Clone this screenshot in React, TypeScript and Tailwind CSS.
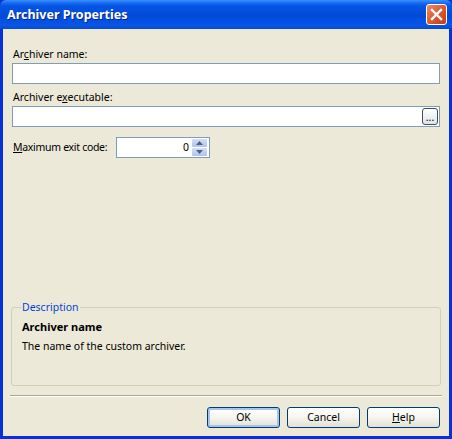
const uiFont = "font-['Noto_Sans',sans-serif]";

function Label({ children }: { children: React.ReactNode }) {
  return <div className="h-[18px] whitespace-nowrap pl-[1px] text-[10.5px] leading-[18px] text-black">{children}</div>;
}

function PushButton({ children, primary }: { children: React.ReactNode; primary?: boolean }) {
  return (
    <button
      className={`h-[21px] w-[73px] rounded-[3px] border border-[#003c74] bg-gradient-to-b from-white via-[#f6f5ef] to-[#e3e0d4] text-[10.5px] leading-none text-black ${
        primary ? "shadow-[inset_0_0_0_2px_#a9c4ea]" : ""
      }`}
    >
      {children}
    </button>
  );
}

function SpinArrow({ up }: { up?: boolean }) {
  return (
    <div className="flex h-[8px] w-[15px] items-center justify-center rounded-[1px] bg-gradient-to-b from-[#d3dff8] to-[#aec3ec]">
      <svg width="7" height="4" viewBox="0 0 7 4">
        <path d={up ? "M0 4 L3.5 0 L7 4 Z" : "M0 0 L3.5 4 L7 0 Z"} fill="#4d6185" />
      </svg>
    </div>
  );
}

export default function App() {
  return (
    <div className={`flex h-[439px] w-[452px] flex-col overflow-hidden bg-[#0831d9] ${uiFont}`}>
      {/* Title bar */}
      <div className="flex h-[29px] shrink-0 items-center justify-between rounded-t-[6px] bg-[linear-gradient(to_bottom,#3a93ff_0%,#1a6cf0_10%,#0556e6_20%,#0349d6_55%,#0556ea_85%,#0a4cc8_100%)] pl-[7px] pr-[5px]">
        <span className="mt-[1px] text-[12.5px] font-bold text-white [text-shadow:1px_1px_0_#0a2a8c]">Archiver Properties</span>
        <div className="mb-[1px] flex h-[21px] w-[21px] items-center justify-center rounded-[3px] border border-white bg-gradient-to-br from-[#e98a66] via-[#dc5a30] to-[#c23c14]">
          <svg width="13" height="13" viewBox="0 0 13 13">
            <path d="M2 2 L11 11 M11 2 L2 11" stroke="white" strokeWidth="2.4" strokeLinecap="square" />
          </svg>
        </div>
      </div>

      {/* Dialog body */}
      <div className="mx-[3px] mb-[3px] flex min-h-0 flex-1 flex-col bg-[#ece9d8] px-[9px]">
        <div className="mt-[16px]">
          <Label>
            Ar<u>c</u>hiver name:
          </Label>
          <div className="h-[21px] border border-[#7f9db9] bg-white" />
        </div>
        <div className="mt-[4px]">
          <Label>
            Archiver e<u>x</u>ecutable:
          </Label>
          <div className="flex h-[21px] items-center justify-end border border-[#7f9db9] bg-white pr-[1px]">
            <div className="flex h-[17px] w-[16px] items-center justify-center rounded-[3px] border border-[#3b4f68] bg-gradient-to-b from-white to-[#dfe3ea] text-[10.5px] leading-[8px] text-black">
              ...
            </div>
          </div>
        </div>
        <div className="mt-[10px] flex items-center">
          <div className="w-[104px] whitespace-nowrap pl-[1px] text-[10.5px] tracking-[-0.3px] text-black">
            <u>M</u>aximum exit code:
          </div>
          <div className="flex h-[21px] w-[94px] items-center justify-end border border-[#7f9db9] bg-white pr-[2px]">
            <span className="mr-[3px] text-[10.5px] text-black">0</span>
            <div className="flex flex-col gap-[1px]">
              <SpinArrow up />
              <SpinArrow />
            </div>
          </div>
        </div>

        {/* Description group */}
        <fieldset className="mx-[-1px] mt-auto h-[85px] rounded-[3px] border border-[#d0d0bf] px-[10px]">
          <legend className="ml-[-1px] px-[1px] text-[10.5px] leading-[13px] text-[#0046d5]">Description</legend>
          <div className="mt-[5px] text-[11px] font-bold leading-[16px] text-black">Archiver name</div>
          <div className="mt-[3px] text-[10.5px] leading-[16px] text-black">The name of the custom archiver.</div>
        </fieldset>

        <div className="mx-[-2px] mt-[9px] h-[2px] border-t border-b border-t-[#aca899] border-b-white" />
        <div className="flex justify-end gap-[7px] pb-[8px] pt-[10px]">
          <PushButton primary>OK</PushButton>
          <PushButton>Cancel</PushButton>
          <PushButton>
            <u>H</u>elp
          </PushButton>
        </div>
      </div>
    </div>
  );
}
